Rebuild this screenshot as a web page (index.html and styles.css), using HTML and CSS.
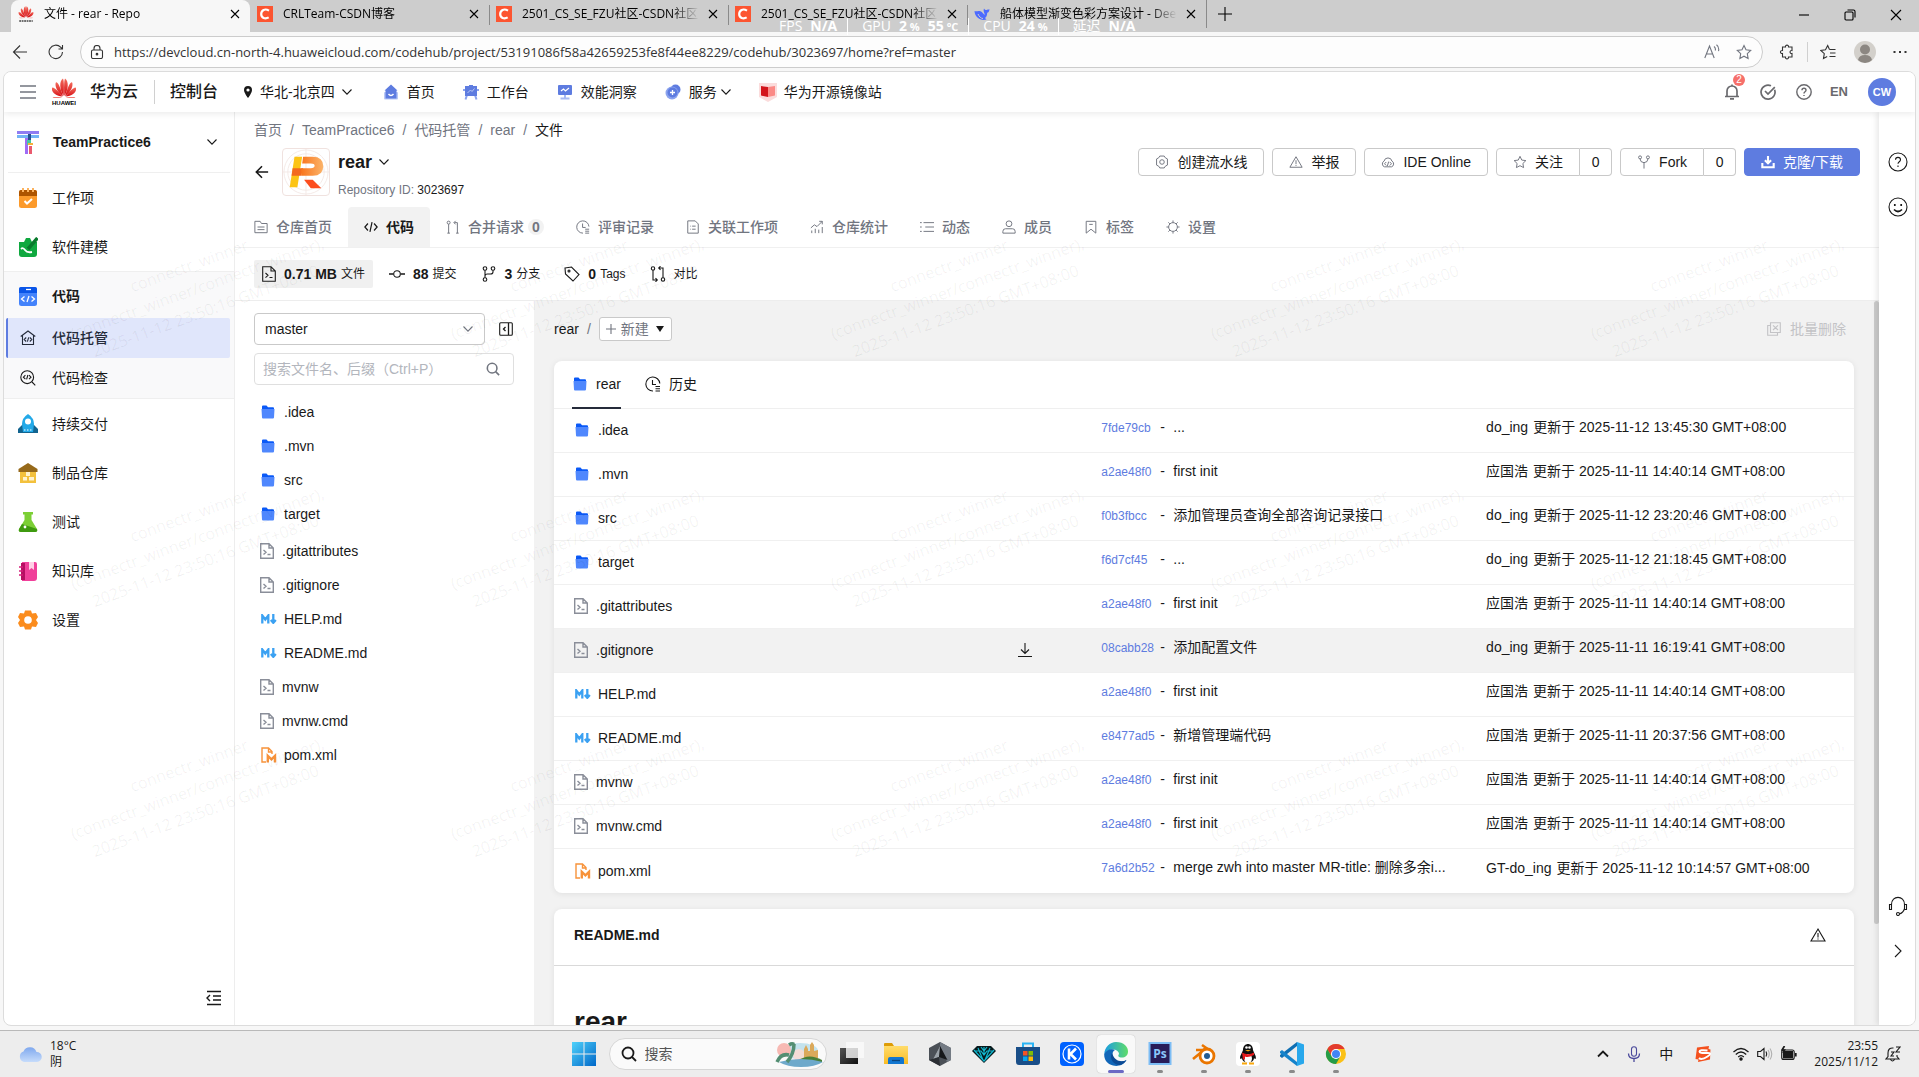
FILE: index.html
```html
<!DOCTYPE html>
<html lang="zh-CN">
<head>
    <meta charset="UTF-8">
    <meta name="viewport" content="width=device-width, initial-scale=1.0">
    <title>文件 - rear - Repo</title>
    <link rel="stylesheet" href="styles.css">
</head>
<body>

    <!-- icon sprite -->
    <svg class="sprite" aria-hidden="true">
        <defs>
            <linearGradient id="g-petal" x1="0" y1="0" x2="0" y2="1"><stop offset="0" stop-color="#f36b5c"/><stop offset="1" stop-color="#d50b12"/></linearGradient>
            <linearGradient id="g-win" x1="0" y1="0" x2="1" y2="1"><stop offset="0" stop-color="#4fd2fb"/><stop offset="1" stop-color="#0067c8"/></linearGradient>
            <linearGradient id="g-edge" x1="0" y1="0" x2="1" y2="0"><stop offset="0" stop-color="#1b9de2"/><stop offset="1" stop-color="#5fdc6a"/></linearGradient>
            <linearGradient id="g-cloud" x1="0" y1="0" x2="0" y2="1"><stop offset="0" stop-color="#7fa8ee"/><stop offset="1" stop-color="#c6dcfb"/></linearGradient>
            <linearGradient id="g-r" x1="0" y1="0" x2="1" y2="0"><stop offset="0" stop-color="#f9751d"/><stop offset="1" stop-color="#fbb46a"/></linearGradient>
            <linearGradient id="g-box" x1="0" y1="0" x2="1" y2="1"><stop offset="0" stop-color="#555"/><stop offset="1" stop-color="#111"/></linearGradient>
            <linearGradient id="g-folder" x1="0" y1="0" x2="0" y2="1"><stop offset="0" stop-color="#ffdc6b"/><stop offset="1" stop-color="#f9bb24"/></linearGradient>
        </defs>
        <symbol id="petals" viewBox="0 0 26 20">
            <g fill="url(#g-petal)">
                <path d="M12.600 18C8.500 12 8 3 12 .6 13.200 3 13 12 12.600 18z"/>
                <path d="M13.400 18C17.500 12 18 3 14 .6 12.800 3 13 12 13.400 18z"/>
                <path d="M12 18.300C7.500 3 5 3.200 4.600 5.200 3.900 9.500 7.500 15 12 18.300z"/>
                <path d="M14 18.300C18.500 3 21 3.200 21.400 5.200 22.100 9.500 18.500 15 14 18.300z"/>
                <path d="M11.500 18.600C9 15.500 4 9.500 1.300 9.600-.5 13.500 4.500 18 11.500 18.600z"/>
                <path d="M14.500 18.600C17 15.500 22 9.500 24.700 9.600 26.500 13.500 21.500 18 14.500 18.600z"/>
                <path d="M11.200 19.200H1.600C3 21 8 20.200 11.200 19.200z"/>
                <path d="M14.800 19.200H24.400C23 21 18 20.200 14.800 19.200z"/>
            </g>
        </symbol>
        <symbol id="chev" viewBox="0 0 12 12"><path d="M1.500 3.500 6 8.200l4.500-4.700"/></symbol>
        <symbol id="x" viewBox="0 0 12 12"><path d="m2 2 8 8M10 2l-8 8"/></symbol>
        <symbol id="back" viewBox="0 0 16 16"><path d="M15 8H1.500M8 1.500 1.500 8 8 14.500"/></symbol>
        <symbol id="star" viewBox="0 0 16 16"><path d="m8 1.500 2 4.300 4.700.6-3.400 3.300.8 4.700L8 12.200l-4.100 2.200.8-4.700L1.300 6.400 6 5.800z"/></symbol>
        <symbol id="help" viewBox="0 0 20 20"><circle cx="10" cy="10" r="9"/><path d="M7.500 7.800c0-3.200 5-3.200 5 0 0 2-2.500 1.800-2.500 4M10 13.600v1.400"/></symbol>
        <symbol id="warn" viewBox="0 0 16 16"><path d="M8 2 15 14H1zM8 6v4.500M8 11.500v1"/></symbol>
        <symbol id="search" viewBox="0 0 16 16"><circle cx="7" cy="7" r="5.500"/><path d="m11 11 4 4"/></symbol>
        <symbol id="folder" viewBox="0 0 14 14"><path d="M1 1.500q0-1 1-1h3.500L7 2.200h5q1 0 1 1V7H1z" fill="#0a59f7"/><path d="M.5 4h13L13 12.500q-.1 1-1 1H2q-1 0-1-1z" fill="#4f87fd"/></symbol>
        <symbol id="file" viewBox="0 0 14 16"><path d="M.7.700h8.300l4.300 4.300v10.300H.7zM9 .700V5h4.300M3.500 7l2.500 2.300L3.500 11.600M7.500 11.500h3"/></symbol>
        <symbol id="md" viewBox="0 0 16 10"><path d="M1.300 9.500V1.500L4.300 5.500 7.300 1.500v8M12.300 0v8.500M9.800 6l2.500 2.800L14.800 6" fill="none" stroke="#3ba1f2" stroke-width="2.300"/></symbol>
        <symbol id="xml" viewBox="0 0 16 16"><path d="M5 15H1V1h6.500L11 4.500V7M7.500 1v4H11" fill="none" stroke="#f7923a" stroke-width="1.400"/><path d="M6.800 15.500V8.800l3.600 3.500L14 8.800v6.700" fill="none" stroke="#f7923a" stroke-width="2.400"/></symbol>
        <symbol id="clock" viewBox="0 0 16 16"><path d="M8 15A7 7 0 1 1 14.800 7.500M7.500 4v4.500H11M10.500 10.500h4.500M10.500 12.800h4.500M10.500 15h4.500"/></symbol>
        <symbol id="csdn" viewBox="0 0 16 16"><rect width="16" height="16" fill="#fc5531"/><path d="M12 4.600C8 2.200 4.300 4 4.200 8c0 4 4 5.500 7.500 3.400" fill="none" stroke="#fff" stroke-width="2.200"/></symbol>
        <symbol id="compare" viewBox="0 0 16 16"><circle cx="3" cy="2.500" r="1.700"/><circle cx="13" cy="13.500" r="1.700"/><path d="M3 4.200V14h4M5.500 12.200 7.300 14l-1.800 1.800M13 11.800V2H9M10.500.200 8.700 2l1.800 1.800"/></symbol>
    </svg>

    <div class="tab-strip">
        <div class="tab tab-active">
            <svg class="fav" viewBox="0 0 26 26"><use href="#petals" width="26" height="20"/><path d="M2 24.500h22" stroke="#444" stroke-width="2.500" stroke-dasharray="3 1"/></svg>
            <span class="tab-title">文件 - rear - Repo</span>
            <button class="tab-close" aria-label="关闭"><svg class="ico s12"><use href="#x"/></svg></button>
        </div>
        <div class="tab">
            <svg class="fav"><use href="#csdn"/></svg>
            <span class="tab-title">CRLTeam-CSDN博客</span>
            <button class="tab-close" aria-label="关闭"><svg class="ico s12"><use href="#x"/></svg></button>
        </div>
        <div class="tab">
            <svg class="fav"><use href="#csdn"/></svg>
            <span class="tab-title">2501_CS_SE_FZU社区-CSDN社区云</span>
            <button class="tab-close" aria-label="关闭"><svg class="ico s12"><use href="#x"/></svg></button>
        </div>
        <div class="tab">
            <svg class="fav"><use href="#csdn"/></svg>
            <span class="tab-title">2501_CS_SE_FZU社区-CSDN社区云</span>
            <button class="tab-close" aria-label="关闭"><svg class="ico s12"><use href="#x"/></svg></button>
        </div>
        <div class="tab">
            <svg class="fav" viewBox="0 0 16 16"><path d="M.5 5c2 1 3.500-.8 6 .3 2 .8 3 3.200 4.500 3.500C10 6.500 9 4.500 10 2.500c.8 1 1.200 1.600 2.500 1.500 1-.5 1.500-.5 3-.8-.2 2-1 3.300-2.300 3.500 0 3-1 4.500-2.200 5.300l1.500 1.500C7 15 .8 12 .5 5z" fill="#4d6bfe"/><path d="M4 8c1 2.500 3 4.500 5 4.500" fill="none" stroke="#cdcdcd"/></svg>
            <span class="tab-title">船体模型渐变色彩方案设计 - DeepSeek</span>
            <button class="tab-close" aria-label="关闭"><svg class="ico s12"><use href="#x"/></svg></button>
        </div>
        <button class="new-tab" aria-label="新建标签页"><svg class="ico s14" viewBox="0 0 14 14"><path d="M7 0v14M0 7h14"/></svg></button>
        <div class="window-buttons">
            <button aria-label="最小化"><svg class="ico s12" viewBox="0 0 12 12"><path d="M1 6h10"/></svg></button>
            <button aria-label="还原"><svg class="ico s12" viewBox="0 0 12 12"><rect x="1" y="3" width="8" height="8" rx="1"/><path d="M3.500 1h6q1.500 0 1.500 1.500v6"/></svg></button>
            <button aria-label="关闭窗口"><svg class="ico s12" viewBox="0 0 12 12"><path d="m1 1 10 10M11 1 1 11"/></svg></button>
        </div>
    </div>

    <div class="perf">
        <span>FPS <b>N/A</b></span>
        <span>GPU <b>2<small> %</small></b> <b>55<small> °C</small></b></span>
        <span>CPU <b>24<small> %</small></b></span>
        <span>延迟 <b>N/A</b></span>
    </div>

    <div class="toolbar">
        <button aria-label="后退"><svg class="ico s16"><use href="#back"/></svg></button>
        <button aria-label="刷新"><svg class="ico s16" viewBox="0 0 16 16"><path d="M14.500 8A6.700 6.700 0 1 1 12.600 3.200L14.500 5M14.500 1v4h-4"/></svg></button>
        <div class="address">
            <svg class="ico s14" viewBox="0 0 14 14"><rect x="1.500" y="5" width="11" height="8.500" rx="1.500"/><path d="M4 5V3.500a3 3 0 0 1 6 0V5"/><circle cx="7" cy="9.200" r=".8" fill="currentColor"/></svg>
            <input type="text" aria-label="地址" value="https://devcloud.cn-north-4.huaweicloud.com/codehub/project/53191086f58a42659253fe8f44ee8229/codehub/3023697/home?ref=master">
            <svg class="ico s16 muted" viewBox="0 0 16 16"><path d="M.8 14 5.500 2l4.700 12M2.500 10h6M10 2.500q2 1.500 1.200 4M12.500.700q3 2.300 2 6.500"/></svg>
            <svg class="ico s16 muted"><use href="#star"/></svg>
        </div>
        <div class="toolbar-right">
            <button aria-label="扩展"><svg class="ico s16" viewBox="0 0 16 16"><path d="M3.500 3h3c-.5-2.500 3.500-2.500 3 0h3.500v3.500c-2.600-.5-2.600 3.500 0 3V13H9.500c.5 2.600-3.500 2.600-3 0h-3V9.500C.8 10 .8 6 3.500 6.500z"/></svg></button>
            <i class="vline"></i>
            <button aria-label="收藏夹"><svg class="ico s16" viewBox="0 0 16 16"><path d="M9.500 5.500 7.700 1.500 5.500 5.800.8 6.400l3.500 3.300-.8 4.700 3.700-2M9.500 5.500H15.500M10 9h5.500M9.500 12.500h6"/></svg></button>
            <svg class="avatar" viewBox="0 0 22 22"><circle cx="11" cy="11" r="11" fill="#d3d0cb"/><circle cx="11" cy="8.500" r="5" fill="#8c8782"/><path d="M4 19q1-5 7-5t7 5q-3 3-7 3t-7-3z" fill="#8c8782"/></svg>
            <button aria-label="更多"><svg class="ico s16" viewBox="0 0 16 16"><path d="M1.500 8h2M7 8h2M12.500 8h2" stroke-width="2"/></svg></button>
        </div>
    </div>

    <div class="frame">
        <header class="topbar">
            <button aria-label="菜单"><svg class="ico s16 muted" viewBox="0 0 16 16"><path d="M0 2h16M0 8h16M0 14h16" stroke-width="1.300"/></svg></button>
            <svg class="brand-logo" viewBox="0 0 26 28"><use href="#petals" width="26" height="20"/><text x="13" y="27" text-anchor="middle">HUAWEI</text></svg>
            <a class="brand" href="#">华为云</a>
            <i class="vline"></i>
            <a class="console" href="#">控制台</a>
            <a class="region" href="#"><svg class="pin" viewBox="0 0 8 12"><path d="M4 0a4 4 0 0 0-4 4c0 3 4 8 4 8s4-5 4-8a4 4 0 0 0-4-4zm0 2.400a1.600 1.600 0 1 1 0 3.200 1.600 1.600 0 0 1 0-3.200z" fill="#191919" fill-rule="evenodd"/></svg>华北-北京四<svg class="ico s12"><use href="#chev"/></svg></a>
            <nav class="topnav">
                <a href="#"><svg class="s16" viewBox="0 0 16 16"><rect x="1" y="8" width="14" height="7.500" rx="1" fill="#b9c8f5"/><path d="M8 .5 14.500 6.500H13.500V14.500H2.500V6.500H1.500z" fill="#5e7ce0"/><path d="M5.500 10q2.500 3 5 0" fill="none" stroke="#fff" stroke-width="1.400"/></svg>首页</a>
                <a href="#"><svg class="s16" viewBox="0 0 16 16"><path d="m4 11-1.500 4.500M12 11l1.500 4.500M0 6h16" stroke="#8ba3ee" stroke-width="2"/><path d="M2 2h4V1h4v1h4v10H2z" fill="#5e7ce0"/><path d="M4.500 9l3-3 1.500 1.500 2.500-3" fill="none" stroke="#b9c8f5"/></svg>工作台</a>
                <a href="#"><svg class="s16" viewBox="0 0 16 16"><rect x="1" y="1" width="14" height="10" rx="1" fill="#5e7ce0"/><path d="M4 7l2.500-2 2 2L12 4" fill="none" stroke="#fff" stroke-width="1.200"/><path d="M8 11v3M3.500 14.500h9" stroke="#a8baf2" stroke-width="2"/></svg>效能洞察</a>
                <a href="#"><svg class="s16" viewBox="0 0 16 16"><circle cx="10.500" cy="5.500" r="5" fill="#5e7ce0"/><circle cx="7" cy="9" r="6.500" fill="#8ba3ee"/><circle cx="7.500" cy="8.500" r="5" fill="#5e7ce0"/><path d="M7.500 6v5M5 8.500h5" stroke="#fff" stroke-width="1.300"/></svg>服务<svg class="ico s12 tight"><use href="#chev"/></svg></a>
                <a class="mirror" href="#"><svg viewBox="0 0 20 20"><path d="M1 1h18v14l-9 5-9-5z" fill="#fbdcdc"/><path d="M3 4l7 1v10l-7-1.500z" fill="#d3141b"/><path d="m10 5 7-1v9.500L10 15z" fill="#fb8a86"/></svg>华为开源镜像站</a>
            </nav>
            <div class="topbar-right">
                <button class="bell" aria-label="通知"><svg class="ico s16" viewBox="0 0 16 16"><path d="M3 12.200V7a5 5 0 0 1 10 0v5.200M1 12.500h14M6 14.800h4M8 .500V2" stroke-width="1.700"/></svg><span class="badge">2</span></button>
                <button aria-label="任务"><svg class="ico s16" viewBox="0 0 16 16"><path d="M14.600 5.700A7 7 0 1 1 11 1.800M5 7l3 3 6.800-6.800" stroke-width="1.700"/></svg></button>
                <button aria-label="帮助"><svg class="ico s16 bold"><use href="#help"/></svg></button>
                <button class="lang">EN</button>
                <button class="user">CW</button>
            </div>
        </header>

        <div class="body">
            <aside class="sidebar">
                <button class="project">
                    <svg class="project-logo" viewBox="0 0 22 23"><path d="M0 1.500h22" stroke="#8f7cf2" stroke-width="3"/><path d="M0 5.500h22" stroke="#72b4f5" stroke-width="3"/><path d="M8 7h3v16H8z" fill="#a06bf5"/><path d="M11 3h3v10h-3z" fill="#274f8d"/><path d="M10 9h4v5h-4z" fill="#45c7a2"/><path d="M11 13h5" stroke="#f5b13a" stroke-width="2"/><path d="M12 15h3v8h-3z" fill="#ea5a6e"/></svg>
                    <span>TeamPractice6</span>
                    <svg class="ico s12"><use href="#chev"/></svg>
                </button>
                <nav class="menu">
                    <a href="#"><svg viewBox="0 0 20 20"><rect x="1" y="2" width="18" height="18" rx="2.500" fill="#fc9a2b"/><path d="M1 8V4q0-2 2-2h14q2 0 2 2v4z" fill="#ad5400"/><path d="M5 0v4M10 0v4M15 0v4" stroke="#fdb35f" stroke-width="2"/><path d="m6.500 13 2.500 2.500 5-4.500" fill="none" stroke="#fff" stroke-width="2"/></svg>工作项</a>
                    <a href="#"><svg viewBox="0 0 20 20"><path d="M1 5h5l2-4h4l2 4h5v12q0 3-3 3H4q-3 0-3-3z" fill="#0fa83f"/><path d="M10 12 19.500 1" stroke="#087a2c" stroke-width="3.500"/><path d="M3 12q2-2 4 1t7 2" fill="none" stroke="#fff" stroke-width="1.800"/></svg>软件建模</a>
                    <div class="group">
                        <a class="on" href="#"><svg viewBox="0 0 20 20"><rect x="1" y="1" width="18" height="19" rx="2.500" fill="#4483fb"/><path d="M1 7V3q0-2 2-2h14q2 0 2 2v4z" fill="#0a55e8"/><path d="M8 3.500h5" stroke="#fff" stroke-width="1.300"/><path d="m6.500 10.500-3 2.500 3 2.500M13.500 10.500l3 2.500-3 2.500M11 10l-2 6" fill="none" stroke="#fff" stroke-width="1.300"/></svg>代码</a>
                        <a class="sub current" href="#"><svg class="ico s16" viewBox="0 0 16 16"><path d="M.7 6.500 8 1l7.300 5.500M2.500 5.500v9h11v-9M6.200 7.500l-2 2 2 2M9.800 7.500l2 2-2 2M8.700 7.300l-1.300 4.400"/></svg>代码托管</a>
                        <a class="sub" href="#"><svg class="ico s16" viewBox="0 0 16 16"><circle cx="7.200" cy="7.200" r="6.400"/><path d="m12 12 3.300 3.300M5.400 5.200l-2 2 2 2M9 5.200l2 2-2 2M7.900 5l-1.300 4.400"/></svg>代码检查</a>
                    </div>
                    <a href="#"><svg viewBox="0 0 20 20"><path d="M5 10 0 15v4h20v-4l-5-5z" fill="#12648f"/><path d="M10 0q6 4 6 10l-1 8H5L4 10Q4 4 10 0z" fill="#23a9e8"/><circle cx="10" cy="7.500" r="3" fill="#fff"/><path d="M6 16h8" stroke="#fff" stroke-dasharray="1.500"/></svg>持续交付</a>
                    <a href="#"><svg viewBox="0 0 20 20"><path d="M2 6h16v14H2z" fill="#f3c13d"/><path d="m10 0 9.500 6v3H.5V6z" fill="#96691a"/><path d="M8 9h4v4H8zM5 14h4v3.500H5zM11 14h5v3.500h-5z" fill="#fff3cf"/></svg>制品仓库</a>
                    <a href="#"><svg viewBox="0 0 20 20"><path d="M5 0h10v2.500h-1.500V8L19 17q1 3-2 3H3q-3 0-2-3L6.500 8V2.500H5z" fill="#7ccf35"/><path d="m4 12 15 5q1 3-2 3H3q-3 0-2-3z" fill="#3f9a10"/><circle cx="7" cy="15" r="1.400" fill="#fff"/></svg>测试</a>
                    <a href="#"><svg viewBox="0 0 20 20"><path d="M4 1h13q2 0 2 2v14q0 3-3 3H4z" fill="#f0409a"/><path d="M3 2h4v17H3z" fill="#b60f62"/><path d="M11 1h5v8l-2.500-2L11 9z" fill="#ffd0e6"/><path d="M1 6h4M1 10h4M1 14h4" stroke="#d61f7b" stroke-width="1.500"/></svg>知识库</a>
                    <a href="#"><svg viewBox="0 0 20 20"><path d="M7 .5h6l1 3 4-.5 2 4-2 3 2 3-2 4-4-.5-1 3H7l-1-3-4 .5-2-4 2-3-2-3L2 3l4 .5z" fill="#fb8c1d"/><circle cx="10" cy="10" r="3.800" fill="#fff"/></svg>设置</a>
                </nav>
                <button class="collapse" aria-label="收起"><svg class="ico s16" viewBox="0 0 16 16"><path d="M1 1.500h14M7 6h8M7 10h8M1 14.500h14M4 5 1 8l3 3" stroke-width="1.400"/></svg></button>
            </aside>

            <main>
                <div class="head">
                    <nav class="crumbs"><a href="#">首页</a><i>/</i><a href="#">TeamPractice6</a><i>/</i><a href="#">代码托管</a><i>/</i><a href="#">rear</a><i>/</i><span>文件</span></nav>
                    <div class="repo">
                        <button class="go-back" aria-label="返回"><svg class="ico s14 bold"><use href="#back"/></svg></button>
                        <svg class="repo-logo" viewBox="0 0 48 48"><circle cx="24" cy="24" r="19" fill="none" stroke="#f3e9e6"/><circle cx="24" cy="24" r="23" fill="none" stroke="#f3e9e6"/><path d="M24 0v48M0 24h48" stroke="#f3e9e6"/><path d="M12 8h8l-5 32H7z" fill="#fcc415"/><path d="M10 20h11l-2 8H9z" fill="#f36a1e"/><path d="M21 8h10q11 0 11 10T31 28H19v-8h10q4 0 4-2.500T29 15h-9z" fill="url(#g-r)"/><path d="M22 32h9l9 9H29z" fill="#fc4c1d"/></svg>
                        <div class="repo-info">
                            <h1>rear<svg class="ico s12"><use href="#chev"/></svg></h1>
                            <p>Repository ID: <span>3023697</span></p>
                        </div>
                        <div class="actions">
                            <button class="btn"><svg class="ico s14 muted" viewBox="0 0 16 16"><circle cx="8" cy="8" r="2.600"/><path d="M5.500 1.200h5l1.300 2 2.400 1.300v7l-2.400 1.300-1.300 2h-5l-1.300-2-2.400-1.300v-7l2.400-1.300z"/></svg>创建流水线</button>
                            <button class="btn"><svg class="ico s14 muted"><use href="#warn"/></svg>举报</button>
                            <button class="btn"><svg class="ico s14 muted" viewBox="0 0 16 16"><path d="M4 13.500a3.500 3.500 0 0 1-.5-6.500 4.600 4.600 0 0 1 9 0 3.500 3.500 0 0 1-.5 6.500zM6 8l-2 2 2 2M10 8l2 2-2 2M8.800 7.500l-1.500 5"/></svg>IDE Online</button>
                            <div class="pair"><button class="btn"><svg class="ico s14 muted"><use href="#star"/></svg>关注</button><button class="btn count">0</button></div>
                            <div class="pair"><button class="btn"><svg class="ico s14 muted" viewBox="0 0 16 16"><circle cx="3.500" cy="2.700" r="1.700"/><circle cx="12.500" cy="2.700" r="1.700"/><path d="M3.500 4.400q0 4 4.500 4.400 4.500-.4 4.500-4.400M8 8.800V15.500"/></svg>Fork</button><button class="btn count">0</button></div>
                            <button class="btn primary"><svg class="ico s14" viewBox="0 0 16 16"><path d="M8 1v8M4.500 6 8 9.500 11.500 6M1.500 9v5h13V9" stroke-width="2.400"/></svg>克隆/下载</button>
                        </div>
                    </div>
                </div>

                <nav class="tabs">
                    <a href="#"><svg class="ico s14" viewBox="0 0 16 16"><path d="M1 14.500v-13h6l1.500 2.500H15v10.500zM4 8h8M4 11h8"/></svg>仓库首页</a>
                    <a class="active" href="#"><svg class="ico s14" viewBox="0 0 16 16"><path d="M4.500 4 1 8l3.500 4M11.500 4 15 8l-3.500 4M9.200 2.500l-2.400 11" stroke-width="1.400"/></svg>代码</a>
                    <a href="#"><svg class="ico s14" viewBox="0 0 16 16"><circle cx="3" cy="3" r="1.700"/><path d="M3 4.700V15M13 15V3H9.500M11 1 9 3l2 2M1.500 15h3M11.500 15h3"/></svg>合并请求<span class="pill">0</span></a>
                    <a href="#"><svg class="ico s14"><use href="#clock"/></svg>评审记录</a>
                    <a href="#"><svg class="ico s14" viewBox="0 0 16 16"><path d="M2 1h8.500L14 4.500V15H2zM7 7h4M7 10.500h4M5 7h.800M5 10.500h.800"/></svg>关联工作项</a>
                    <a href="#"><svg class="ico s14" viewBox="0 0 16 16"><path d="M1 9l4-3.500 3 2L14 1.500M10.500 1.500H14V5M2 12v3M6 10v5M10 11v4M14 8v7"/></svg>仓库统计</a>
                    <a href="#"><svg class="ico s14" viewBox="0 0 16 16"><path d="M4 3h12M6 8h10M4 13h12M0 3h2M0 8h2M0 13h2"/></svg>动态</a>
                    <a href="#"><svg class="ico s14" viewBox="0 0 16 16"><circle cx="8" cy="4.300" r="3.300"/><path d="M1 15v-2q0-3 3-3h8q3 0 3 3v2z"/></svg>成员</a>
                    <a href="#"><svg class="ico s14" viewBox="0 0 16 16"><path d="M2.500 1.500h11V15L8 10.500 2.500 15zM6 5h4"/></svg>标签</a>
                    <a href="#"><svg class="ico s14" viewBox="0 0 16 16"><circle cx="8" cy="8" r="5"/><path d="M8 .500V3M8 13v2.500M.500 8H3M13 8h2.500M2.700 2.700l1.800 1.800M11.500 11.500l1.800 1.800M2.700 13.300l1.800-1.800M11.500 4.500l1.800-1.800"/></svg>设置</a>
                </nav>

                <div class="stats">
                    <a class="active" href="#"><svg class="ico file"><use href="#file"/></svg><b>0.71 MB</b>文件</a>
                    <a href="#"><svg class="ico s16" viewBox="0 0 16 16"><circle cx="8" cy="8" r="3.300"/><path d="M0 8h4.500M11.500 8H16" stroke-width="1.300"/></svg><b>88</b>提交</a>
                    <a href="#"><svg class="ico s16" viewBox="0 0 16 16"><circle cx="4" cy="2.500" r="1.800"/><circle cx="12" cy="2.500" r="1.800"/><circle cx="4" cy="13.500" r="1.800"/><path d="M4 4.300v7.400M12 4.300V6Q12 8 9.500 8H6.500Q4 8 4 10"/></svg><b>3</b>分支</a>
                    <a href="#"><svg class="ico s16" viewBox="0 0 16 16"><path d="M1 2 7.500 1 15 8.500 9 15 1.500 8z"/><circle cx="5" cy="5" r="1"/></svg><b>0</b>Tags</a>
                    <a href="#"><svg class="ico s16"><use href="#compare"/></svg>对比</a>
                </div>

                <div class="content">
                    <section class="tree">
                        <div class="branch-row">
                            <div class="select">
                                <select aria-label="分支"><option>master</option></select>
                                <svg class="ico s12"><use href="#chev"/></svg>
                            </div>
                            <button aria-label="收起目录"><svg class="ico s14" viewBox="0 0 14 14"><rect x=".7" y=".7" width="12.600" height="12.600" rx="1"/><path d="M9.500 1v12M6.500 5l-2 2 2 2" stroke-width="1.300"/></svg></button>
                        </div>
                        <div class="search">
                            <input type="text" aria-label="搜索文件" placeholder="搜索文件名、后缀（Ctrl+P）">
                            <svg class="ico s14 bold"><use href="#search"/></svg>
                        </div>
                        <ul>
                            <li><a href="#"><svg class="folder"><use href="#folder"/></svg>.idea</a></li>
                            <li><a href="#"><svg class="folder"><use href="#folder"/></svg>.mvn</a></li>
                            <li><a href="#"><svg class="folder"><use href="#folder"/></svg>src</a></li>
                            <li><a href="#"><svg class="folder"><use href="#folder"/></svg>target</a></li>
                        </ul>
                        <ul class="files">
                            <li><a href="#"><svg class="ico file"><use href="#file"/></svg>.gitattributes</a></li>
                            <li><a href="#"><svg class="ico file"><use href="#file"/></svg>.gitignore</a></li>
                            <li><a href="#"><svg class="md"><use href="#md"/></svg>HELP.md</a></li>
                            <li><a href="#"><svg class="md"><use href="#md"/></svg>README.md</a></li>
                            <li><a href="#"><svg class="ico file"><use href="#file"/></svg>mvnw</a></li>
                            <li><a href="#"><svg class="ico file"><use href="#file"/></svg>mvnw.cmd</a></li>
                            <li><a href="#"><svg class="xml"><use href="#xml"/></svg>pom.xml</a></li>
                        </ul>
                    </section>

                    <section class="panel">
                        <div class="path-row">
                            <a href="#">rear</a><i>/</i>
                            <button class="create"><svg class="ico s12" viewBox="0 0 12 12"><path d="M6 1v10M1 6h10"/></svg>新建<svg class="caret" viewBox="0 0 8 6"><path d="M0 0h8L4 6z"/></svg></button>
                            <button class="batch" disabled><svg class="ico s14" viewBox="0 0 14 14"><path d="M3.500.700h9.800v9.800H3.500zM3.500 3.500H.7v9.800h9.800v-2.800M6 3.300l5 4.700M11 3.300 6 8"/></svg>批量删除</button>
                        </div>

                        <div class="card">
                            <div class="card-tabs">
                                <a class="active" href="#"><svg class="folder"><use href="#folder"/></svg>rear</a>
                                <a href="#"><svg class="ico s16"><use href="#clock"/></svg>历史</a>
                            </div>
                            <table>
                                <colgroup><col class="c-name"><col class="c-commit"><col></colgroup>
                                <tbody>
                                    <tr><td><div class="name"><svg class="folder"><use href="#folder"/></svg><a href="#">.idea</a></div></td><td><a class="hash" href="#">7fde79cb</a><i>-</i>...</td><td><span class="who">do_ing</span>更新于 2025-11-12 13:45:30 GMT+08:00</td></tr>
                                    <tr><td><div class="name"><svg class="folder"><use href="#folder"/></svg><a href="#">.mvn</a></div></td><td><a class="hash" href="#">a2ae48f0</a><i>-</i>first init</td><td><span class="who">应国浩</span>更新于 2025-11-11 14:40:14 GMT+08:00</td></tr>
                                    <tr><td><div class="name"><svg class="folder"><use href="#folder"/></svg><a href="#">src</a></div></td><td><a class="hash" href="#">f0b3fbcc</a><i>-</i>添加管理员查询全部咨询记录接口</td><td><span class="who">do_ing</span>更新于 2025-11-12 23:20:46 GMT+08:00</td></tr>
                                    <tr><td><div class="name"><svg class="folder"><use href="#folder"/></svg><a href="#">target</a></div></td><td><a class="hash" href="#">f6d7cf45</a><i>-</i>...</td><td><span class="who">do_ing</span>更新于 2025-11-12 21:18:45 GMT+08:00</td></tr>
                                    <tr><td><div class="name"><svg class="ico file"><use href="#file"/></svg><a href="#">.gitattributes</a></div></td><td><a class="hash" href="#">a2ae48f0</a><i>-</i>first init</td><td><span class="who">应国浩</span>更新于 2025-11-11 14:40:14 GMT+08:00</td></tr>
                                    <tr class="hover"><td><div class="name"><svg class="ico file"><use href="#file"/></svg><a href="#">.gitignore</a><button aria-label="下载"><svg class="ico s14" viewBox="0 0 14 14"><path d="M7 0v10M3 6.500 7 10.500l4-4M0 13.500h14"/></svg></button></div></td><td><a class="hash" href="#">08cabb28</a><i>-</i>添加配置文件</td><td><span class="who">do_ing</span>更新于 2025-11-11 16:19:41 GMT+08:00</td></tr>
                                    <tr><td><div class="name"><svg class="md"><use href="#md"/></svg><a href="#">HELP.md</a></div></td><td><a class="hash" href="#">a2ae48f0</a><i>-</i>first init</td><td><span class="who">应国浩</span>更新于 2025-11-11 14:40:14 GMT+08:00</td></tr>
                                    <tr><td><div class="name"><svg class="md"><use href="#md"/></svg><a href="#">README.md</a></div></td><td><a class="hash" href="#">e8477ad5</a><i>-</i>新增管理端代码</td><td><span class="who">应国浩</span>更新于 2025-11-11 20:37:56 GMT+08:00</td></tr>
                                    <tr><td><div class="name"><svg class="ico file"><use href="#file"/></svg><a href="#">mvnw</a></div></td><td><a class="hash" href="#">a2ae48f0</a><i>-</i>first init</td><td><span class="who">应国浩</span>更新于 2025-11-11 14:40:14 GMT+08:00</td></tr>
                                    <tr><td><div class="name"><svg class="ico file"><use href="#file"/></svg><a href="#">mvnw.cmd</a></div></td><td><a class="hash" href="#">a2ae48f0</a><i>-</i>first init</td><td><span class="who">应国浩</span>更新于 2025-11-11 14:40:14 GMT+08:00</td></tr>
                                    <tr><td><div class="name"><svg class="xml"><use href="#xml"/></svg><a href="#">pom.xml</a></div></td><td><a class="hash" href="#">7a6d2b52</a><i>-</i>merge zwh into master MR-title: 删除多余i...</td><td><span class="who">GT-do_ing</span>更新于 2025-11-12 10:14:57 GMT+08:00</td></tr>
                                </tbody>
                            </table>
                        </div>

                        <div class="card readme">
                            <div class="readme-head"><h3>README.md</h3><svg class="ico s16"><use href="#warn"/></svg></div>
                            <h2>rear</h2>
                        </div>
                        <div class="scrollbar"></div>
                    </section>
                </div>
            </main>

            <aside class="rail">
                <button aria-label="帮助"><svg class="ico s20"><use href="#help"/></svg></button>
                <button aria-label="反馈"><svg class="ico s20" viewBox="0 0 20 20"><circle cx="10" cy="10" r="9"/><path d="M6 12.500q4 4 8 0M6.800 7v2M13.200 7v2" stroke-width="1.700"/></svg></button>
                <button class="headset" aria-label="客服"><svg class="ico s20" viewBox="0 0 20 20"><path d="M3.500 8.500C3.500-1 16.500-1 16.500 8.500v4q-1 4-5 5.500M3.500 8.500h-2v5h2zM16.500 8.500h2v5h-2"/><circle cx="10" cy="18" r="1.500"/></svg></button>
                <button aria-label="展开"><svg class="ico s16" viewBox="0 0 16 16"><path d="m5 2 6 6-6 6"/></svg></button>
            </aside>
        </div>

        <div class="watermark" id="watermark" aria-hidden="true"></div>
    </div>

    <footer class="taskbar">
        <button class="weather">
            <svg viewBox="0 0 24 16"><path d="M6 16a5.500 5.500 0 0 1-.5-10.500A7 7 0 0 1 18.500 6 5 5 0 0 1 19 16z" fill="url(#g-cloud)"/></svg>
            <span>18°C<br>阴</span>
        </button>
        <div class="apps">
            <button aria-label="开始"><svg viewBox="0 0 24 24"><path d="M0 0h11.500v11.500H0zM12.500 0H24v11.500H12.500zM0 12.500h11.500V24H0zM12.500 12.500H24V24H12.500z" fill="url(#g-win)"/></svg></button>
            <label class="task-search">
                <svg class="ico s16 bold"><use href="#search"/></svg>
                <input type="text" placeholder="搜索" aria-label="搜索">
                <svg class="scene" viewBox="0 0 50 26"><ellipse cx="27" cy="10" rx="18" ry="8" fill="#c4e3ee"/><circle cx="11" cy="9" r="7" fill="#f7b9b3"/><circle cx="26" cy="14" r="6" fill="#f4dcd6"/><path d="M31 17V8l2-4 2 4v2h2V4l2-3 2 3v6l4-1v8z" fill="#dba95b"/><path d="M26 19q10-7 23 0v2H26z" fill="#497f38"/><path d="M6 21q22-6 44 0-8 5-22 5T6 21z" fill="#6ea9cb"/><path d="M4 21q4-9 12-7" fill="none" stroke="#538e72" stroke-width="3.500"/><path d="M14 21q7-8 7-18M21 3.500q-2-1.500-5 .5" fill="none" stroke="#538e72" stroke-width="3.500"/></svg>
            </label>
            <button aria-label="任务视图"><svg viewBox="0 0 24 24"><rect y="6" width="18" height="16" fill="url(#g-box)"/><rect x="6" width="18" height="16" fill="#fafafa" opacity=".8"/></svg></button>
            <button aria-label="文件资源管理器"><svg viewBox="0 0 24 24"><path d="M0 2q0-1 1-1h7l2 3H0z" fill="#dd9c07"/><path d="M0 4h24v18H0z" fill="url(#g-folder)"/><path d="M4 22v-5q0-2 2-2h12q2 0 2 2v5z" fill="#1176d0"/><path d="M8 18.500h8" stroke="#0a467f" stroke-width="1.300"/></svg></button>
            <button aria-label="启动器"><svg viewBox="0 0 24 24"><path d="M12 0 23 6v12l-11 6L1 18V6z" fill="#4b5057"/><path d="M12 0 23 6v12l-4 2L12 4z" fill="#747b84"/><path d="M12 4 19.500 18 11 15l-6.500 3z" fill="#16181b"/><path d="M12 4 4.500 18l6.500-3z" fill="#9aa1a8"/><path d="M1 18l10-3 1 9z" fill="#2b2e33"/></svg></button>
            <button aria-label="钻石"><svg viewBox="0 0 24 24"><path d="M5 4h14l5 5-12 12L0 9z" fill="#07191c"/><path d="M2 8l10 11L22 8M6 6l5 12M18 6l-5 12M12 5v9M3 9h6l3 4 3-4h6M9 5l3 4 3-4" fill="none" stroke="#12b8cf" stroke-width="1.200"/></svg></button>
            <button aria-label="应用商店"><svg viewBox="0 0 24 24"><path d="M7 6V1.500h10V6" fill="none" stroke="#28b4f5" stroke-width="2"/><path d="M0 5h24v15q0 3-3 3H3q-3 0-3-3z" fill="#194e88"/><path d="M7 9h4.500v4.500H7z" fill="#f35325"/><path d="M12.500 9H17v4.500h-4.500z" fill="#81bc06"/><path d="M7 14.500h4.500V19H7z" fill="#05a6f0"/><path d="M12.500 14.500H17V19h-4.500z" fill="#ffba08"/></svg></button>
            <button aria-label="酷狗"><svg viewBox="0 0 24 24"><rect width="24" height="24" rx="4" fill="#0062ff"/><circle cx="12" cy="12" r="9" fill="none" stroke="#fff" stroke-width="1.200"/><path d="M9 6.500v11M16 6.500 10.500 12l5.500 5.500" fill="none" stroke="#fff" stroke-width="2.600"/></svg></button>
            <button class="running focused" aria-label="Edge"><svg viewBox="0 0 24 24"><path d="M.3 12C.5 5 6 0 12 0c8 0 12 5 12 9.500 0 4-3 6-6 6-3.500 0-4.500-1.500-3-3.500C15 7 5 5 .3 12z" fill="url(#g-edge)"/><path d="M.2 12C2 7.500 8 6 11 8c-4 1.500-3.500 10 3.500 11.500 3 .6 6-.4 8-1.500C19 24 13 24.500 9 23.500 3 22 0 17.500.2 12z" fill="#1166b8"/><path d="M8 11c-3 5 1 12 8 12 3-.5 5-2.500 6.500-5-5 2.500-12 1.500-14.500-7z" fill="#0c4a94"/></svg></button>
            <button class="running" aria-label="Photoshop"><svg viewBox="0 0 24 24"><rect x="1.500" y="1" width="21" height="21" fill="#281c58" stroke="#7dbdf5" stroke-width="2"/><text x="12" y="16" text-anchor="middle" class="ps">Ps</text></svg></button>
            <button class="running" aria-label="Blender"><svg viewBox="0 0 24 24"><path d="M1 17 12 8H4M10 3l10 7" fill="none" stroke="#ea7600" stroke-width="2.600"/><circle cx="15" cy="14" r="7" fill="#fff" stroke="#ea7600" stroke-width="2.800"/><circle cx="15" cy="14" r="3" fill="#235c93"/></svg></button>
            <button class="running" aria-label="QQ"><svg viewBox="0 0 24 24"><rect width="24" height="24" rx="4" fill="#fff"/><path d="M7 8c0-8 10-8 10 0 1 3 4 7 2.500 9-1-.2-1.500-1-1.500-1 0 6-12 6-12 0 0 0-.5.8-1.500 1C3 15 6 11 7 8z" fill="#111"/><ellipse cx="12" cy="16.500" rx="4" ry="4.500" fill="#fff"/><path d="M6 10.500q6 3.500 12 0v2.500q-6 3-9 1.500v3H7z" fill="#e61b1b"/><path d="M9 8h6l-3 1.500z" fill="#f9a80d"/><circle cx="10.500" cy="5.500" r="1.300" fill="#fff"/><circle cx="13.500" cy="5.500" r="1.300" fill="#fff"/><path d="M6 21.500h5M13 21.500h5" stroke="#f9a80d" stroke-width="2"/></svg></button>
            <button class="running" aria-label="VS Code"><svg viewBox="0 0 24 24"><path d="m17 4L2 16l-2-1.500V13L17 0z" fill="#0f6fb3"/><path d="M17 20 2 8 0 9.500V11l17 13z" fill="#1583cb"/><path d="m17 0 7 2.500v19L17 24z" fill="#28a8ec"/></svg></button>
            <button class="running" aria-label="Chrome"><svg viewBox="0 0 24 24"><circle cx="12" cy="12" r="10" fill="#fbc116"/><path d="M3.300 7a10 10 0 0 1 17.400 0H12L7.700 14.500z" fill="#e33b2e"/><path d="M3.300 7A10 10 0 0 0 12 22l4.300-7.500H7.700z" fill="#259c48"/><circle cx="12" cy="12" r="5" fill="#fff"/><circle cx="12" cy="12" r="4" fill="#4285f4"/></svg></button>
        </div>
        <div class="tray">
            <button aria-label="显示隐藏的图标"><svg class="ico s12 bold" viewBox="0 0 12 12"><path d="M1 8.500 6 3.500l5 5"/></svg></button>
            <button class="mic" aria-label="麦克风"><svg class="ico s16" viewBox="0 0 16 16"><rect x="5.500" y=".700" width="5" height="9.500" rx="2.500"/><path d="M2.500 7.500q0 5 5.500 5t5.500-5M8 12.500V16" stroke-width="1.300"/></svg></button>
            <button class="ime">中</button>
            <button class="sogou" aria-label="输入法"><svg viewBox="0 0 16 16"><path d="M2 1.500 14 0l-.5 3 2 .5-.5 10L3 16l.500-2.500-3-.5L1 9z" fill="#f4511e"/><path d="M12.500 4.500q-8-1-8 1t7 1.500 1 3.500-8.500 1.500" fill="none" stroke="#fff" stroke-width="2"/></svg></button>
            <button class="net" aria-label="网络和声音">
                <svg class="ico s16" viewBox="0 0 16 16"><path d="M.5 6q7.500-7 15 0M2.800 8.500q5.200-5 10.400 0M5.200 11q2.800-2.700 5.600 0" stroke-width="1.300"/><circle cx="8" cy="13" r="1.200" fill="currentColor"/></svg>
                <svg class="ico s16" viewBox="0 0 16 16"><path d="M.7 5.500h2.800L7 2.500v11l-3.500-3H.7zM9 5.500q1.500 2.500 0 5"/><path d="M11 4q2.500 4 0 8M13 2.500q3.500 5.500 0 11" stroke="#b0b0b0"/></svg>
                <svg class="ico s16" viewBox="0 0 16 16"><rect x=".7" y="4" width="12.500" height="9.500" rx="2"/><rect x="2.500" y="5.500" width="9" height="6.500" fill="currentColor"/><path d="M14.800 7v3.500M3.500 0 1 4h2.500L2 7" stroke-width="1.700"/></svg>
            </button>
            <div class="clock">23:55<br>2025/11/12</div>
            <button aria-label="通知中心"><svg class="ico s16" viewBox="0 0 16 16"><path d="M8.500 2Q3 1.500 3 7v3.500L1 13h13l-2-2.500V9M5.500 13.500q2 3 4 0M6 6h3L6 10h3M11 1h4l-4 5h4"/></svg></button>
        </div>
    </footer>

    <script>
        // user watermark repeated over the whole page
        const watermark = document.getElementById('watermark');
        const lines = ['connectr_winner', '(connectr_winner/connectr_winner),', '2025-11-12 23:50:16 GMT+08:00'];

        for (let i = 0; i < 15; i++) {
            const mark = document.createElement('p');
            mark.innerHTML = lines.join('<br>');
            watermark.appendChild(mark);
        }
    </script>
</body>
</html>
```
FILE: styles.css
```css
* {
    box-sizing: border-box;
}

body {
    margin: 0;
    height: 100vh;
    display: flex;
    flex-direction: column;
    overflow: hidden;
    position: relative;
    background: #f7f7f7;
    color: #191919;
    font-family: "Liberation Sans", "Noto Sans CJK SC", sans-serif;
    font-size: 14px;
    line-height: 20px;
}

h1, h2, h3, p, ul {
    margin: 0;
    padding: 0;
}

ul {
    list-style: none;
}

i {
    font-style: normal;
}

a {
    color: inherit;
    text-decoration: none;
}

button {
    display: flex;
    align-items: center;
    justify-content: center;
    padding: 0;
    border: none;
    background: none;
    color: inherit;
    font: inherit;
}

input, select {
    min-width: 0;
    border: none;
    outline: none;
    background: none;
    color: inherit;
    font: inherit;
}

svg {
    flex-shrink: 0;
}

.sprite {
    position: absolute;
    width: 0;
    height: 0;
}

.ico {
    fill: none;
    stroke: currentColor;
    stroke-width: 1.1;
}

.s12 { width: 12px; height: 12px; }
.s14 { width: 14px; height: 14px; }
.s16 { width: 16px; height: 16px; }
.s20 { width: 20px; height: 20px; }

.bold { stroke-width: 1.8; }
.muted { color: #71757f; }

.vline {
    width: 1px;
    height: 20px;
    background: #d0d0d0;
}

/* browser tabs */
.tab-strip {
    display: flex;
    height: 32px;
    padding-left: 11px;
    background: #cdcdcd;
    color: #000;
    font-family: "Open Sans", "Noto Sans CJK SC", sans-serif;
    font-size: 12px;
}

.tab {
    display: flex;
    align-items: center;
    width: 239px;
    padding: 0 9px 4px 7px;
    position: relative;
}

.tab:not(.tab-active) + .tab::before {
    content: "";
    position: absolute;
    left: 0;
    top: 5px;
    width: 1px;
    height: 20px;
    background: #8a8a8a;
}

.tab-active {
    background: #f7f7f7;
    border-radius: 8px 8px 0 0;
}

.fav {
    width: 16px;
    height: 16px;
    margin-right: 10px;
}

.tab-title {
    flex: 1;
    overflow: hidden;
    white-space: nowrap;
    margin-right: 8px;
    mask-image: linear-gradient(to right, #000 85%, transparent);
}

.new-tab {
    width: 36px;
    height: 28px;
    border-left: 1px solid #8a8a8a;
}

.window-buttons {
    display: flex;
    margin-left: auto;
}

.window-buttons button {
    width: 46px;
    height: 30px;
}

.perf {
    position: absolute;
    left: 779px;
    top: 18px;
    display: flex;
    color: #fff;
    font-family: "Open Sans", "Noto Sans CJK SC", sans-serif;
    font-size: 14px;
    line-height: 16px;
}

.perf span {
    display: flex;
    gap: 8px;
    padding-right: 10px;
}

.perf span + span {
    border-left: 1px solid #fff;
    padding-left: 14px;
}

.perf small {
    font-size: 11px;
}

/* address bar */
.toolbar {
    display: flex;
    align-items: center;
    gap: 16px;
    height: 39px;
    padding: 0 11px 0 12px;
    color: #333;
}

.toolbar > button {
    width: 16px;
}

.toolbar > button:first-child {
    margin-right: 4px;
}

.address {
    flex: 1;
    display: flex;
    align-items: center;
    gap: 10px;
    height: 32px;
    padding: 0 10px 0 9px;
    border: 1px solid #ccc;
    border-radius: 16px;
    background: #fdfdfd;
    font-family: "Open Sans", "Noto Sans CJK SC", sans-serif;
    font-size: 13px;
}

.address input {
    flex: 1;
    padding: 0;
}

.address .muted + .muted {
    margin-left: 6px;
}

.toolbar-right {
    display: flex;
    align-items: center;
    gap: 12px;
}

.toolbar-right button {
    width: 16px;
}

.avatar {
    width: 22px;
    height: 22px;
    margin: 0 4px 0 6px;
}

/* page frame */
.frame {
    flex: 1;
    min-height: 0;
    display: flex;
    flex-direction: column;
    position: relative;
    margin: 0 3px 4px;
    border: 1px solid #dcdcdc;
    border-radius: 8px;
    overflow: hidden;
    background: #fff;
}

.topbar {
    display: flex;
    align-items: center;
    height: 40px;
    padding: 0 19px 0 16px;
    position: relative;
    z-index: 2;
    background: #fff;
    box-shadow: 0 2px 6px rgba(0, 0, 0, 0.08);
}

.brand-logo {
    width: 26px;
    height: 28px;
    margin: 0 13px 0 15px;
}

.brand-logo text {
    font-size: 6px;
    font-weight: bold;
}

.brand, .console {
    font-size: 16px;
    font-weight: 500;
}

.topbar .vline {
    margin: 0 15px 0 16px;
    height: 24px;
}

.region {
    display: flex;
    align-items: center;
    gap: 8px;
    margin: 0 30px 0 26px;
}

.region .ico {
    margin-left: -2px;
}

.pin {
    width: 8px;
    height: 12px;
}

.topnav {
    display: flex;
    gap: 28px;
}

.topnav a {
    display: flex;
    align-items: center;
    gap: 8px;
}

.topnav .tight {
    margin-left: -5px;
}

.topnav .mirror svg {
    width: 20px;
    height: 20px;
    margin: 0 -2px;
}

.topbar-right {
    display: flex;
    align-items: center;
    gap: 20px;
    margin-left: auto;
    color: #6a6a6e;
}

.bell {
    position: relative;
}

.badge {
    position: absolute;
    left: 9px;
    top: -10px;
    width: 12px;
    height: 12px;
    border-radius: 6px;
    background: #f66f6a;
    color: #fff;
    font-size: 10px;
    line-height: 12px;
}

.lang {
    margin-left: -2px;
    font-weight: bold;
    font-size: 13px;
}

.user {
    width: 28px;
    height: 28px;
    border-radius: 14px;
    background: #5e7ce0;
    color: #fff;
    font-size: 11px;
    font-weight: bold;
}

.body {
    flex: 1;
    min-height: 0;
    display: flex;
}

/* left menu */
.sidebar {
    width: 231px;
    display: flex;
    flex-direction: column;
    border-right: 1px solid #ededed;
}

.project {
    gap: 14px;
    height: 61px;
    margin: 0 4px;
    padding: 0 12px 0 9px;
    border-bottom: 1px solid #efefef;
    font-weight: bold;
}

.project span {
    flex: 1;
    text-align: left;
}

.project-logo {
    width: 22px;
    height: 23px;
}

.menu a {
    display: flex;
    align-items: center;
    gap: 14px;
    height: 49px;
    padding-left: 14px;
}

.menu svg {
    width: 20px;
    height: 20px;
}

.group {
    background: #f9f9fa;
    border-top: 1px solid #efefef;
    border-bottom: 1px solid #efefef;
}

.menu .on {
    height: 48px;
    font-weight: bold;
}

.menu .sub {
    height: 40px;
    margin: 0 4px 0 2px;
    padding-left: 14px;
    gap: 16px;
}

.menu .sub svg {
    width: 16px;
    height: 16px;
}

.menu .current {
    margin-top: -2px;
    padding-left: 12px;
    border-left: 2px solid #5e7ce0;
    border-radius: 2px;
    background: #e0e6fb;
    color: #252b3a;
    font-weight: 500;
}

.collapse {
    margin: auto 12px 19px auto;
}

/* repository header */
main {
    flex: 1;
    min-width: 0;
    display: flex;
    flex-direction: column;
}

.head {
    padding: 8px 19px 7px;
}

.crumbs {
    display: flex;
    gap: 8px;
    color: #71757f;
}

.crumbs span {
    color: #191919;
}

.repo {
    display: flex;
    margin-top: 8px;
}

.go-back {
    width: 16px;
    height: 48px;
}

.repo-logo {
    width: 48px;
    height: 48px;
    margin: 0 8px 0 12px;
    border: 1px solid #f0e2df;
    border-radius: 4px;
}

.repo-info h1 {
    display: flex;
    align-items: center;
    gap: 6px;
    font-size: 18px;
    line-height: 28px;
}

.repo-info p {
    margin-top: 4px;
    color: #71757f;
    font-size: 12px;
}

.repo-info p span {
    color: #191919;
}

.actions {
    display: flex;
    align-items: flex-start;
    gap: 8px;
    margin-left: auto;
}

.btn {
    gap: 8px;
    height: 28px;
    padding: 0 16px;
    border: 1px solid #c9c9c9;
    border-radius: 4px;
}

.pair {
    display: flex;
}

.pair .btn:first-child {
    border-radius: 4px 0 0 4px;
}

.pair .count {
    width: 32px;
    padding: 0;
    border-left: none;
    border-radius: 0 4px 4px 0;
}

.primary {
    border-color: #5e7ce0;
    background: #5e7ce0;
    color: #fff;
}

.tabs {
    display: flex;
    padding-left: 3px;
    border-bottom: 1px solid #f0f0f0;
}

.tabs a {
    display: flex;
    align-items: center;
    gap: 8px;
    height: 40px;
    padding: 0 16px;
    color: #71757f;
    font-weight: 500;
}

.tabs .active {
    border-radius: 4px 4px 0 0;
    background: #f2f2f2;
    color: #191919;
    font-weight: bold;
}

.pill {
    width: 16px;
    margin-left: -4px;
    border-radius: 8px;
    background: #f2f2f2;
    font-weight: bold;
    line-height: 16px;
    text-align: center;
}

.stats {
    display: flex;
    gap: 8px;
    padding: 12px 19px;
    border-bottom: 1px solid #ededed;
}

.stats a {
    display: flex;
    align-items: center;
    height: 28px;
    padding: 0 8px;
    gap: 4px;
    border-radius: 2px;
    font-size: 12px;
}

.stats svg {
    margin-right: 4px;
}

.stats b {
    font-size: 14px;
}

.stats .active {
    background: #f0f0f0;
}

.content {
    flex: 1;
    min-height: 0;
    display: flex;
}

/* file tree */
.tree {
    width: 299px;
    padding: 12px 20px 0 19px;
}

.branch-row {
    display: flex;
    align-items: center;
    gap: 14px;
    margin-bottom: 8px;
    padding-right: 1px;
}

.select {
    flex: 1;
    position: relative;
    height: 32px;
    border: 1px solid #c9c9c9;
    border-radius: 4px;
}

.select select {
    width: 100%;
    height: 100%;
    padding: 0 10px;
    appearance: none;
}

.select .ico {
    position: absolute;
    right: 10px;
    top: 9px;
    color: #71757f;
}

.search {
    display: flex;
    align-items: center;
    height: 32px;
    margin-bottom: 10px;
    padding: 0 13px 0 8px;
    border: 1px solid #dfdfdf;
    border-radius: 4px;
    color: #71757f;
}

.search input {
    flex: 1;
    padding: 0;
}

.search input::placeholder {
    color: #b3b6bd;
}

.tree li a {
    display: flex;
    align-items: center;
    height: 34px;
    padding-left: 6px;
}

.tree .files {
    margin-top: 3px;
}

.folder {
    width: 14px;
    height: 14px;
    margin: 0 9px 0 1px;
}

.file {
    width: 14px;
    height: 16px;
    margin-right: 8px;
}

.tree .file, .name .file {
    color: #8a8e99;
    stroke-width: 1.4;
}

.md {
    width: 16px;
    height: 10px;
    margin: 0 7px 0 1px;
}

.xml {
    width: 16px;
    height: 16px;
    margin: 0 7px 0 1px;
}

/* file list */
.panel {
    flex: 1;
    min-width: 0;
    position: relative;
    padding: 12px 25px 0 20px;
    background: #f2f2f2;
    overflow: hidden;
}

.path-row {
    display: flex;
    align-items: center;
    gap: 8px;
    height: 32px;
    margin-bottom: 16px;
}

.path-row i {
    color: #71757f;
}

.create {
    height: 24px;
    gap: 4px;
    padding: 0 7px 0 5px;
    border: 1px solid #c9c9c9;
    border-radius: 3px;
    background: #fff;
    color: #71757f;
}

.caret {
    width: 8px;
    height: 6px;
    margin-left: 3px;
    fill: #191919;
}

.batch {
    gap: 9px;
    margin-left: auto;
    padding-right: 8px;
    color: #c3c3c6;
}

.card {
    border-radius: 8px;
    background: #fff;
    box-shadow: 0 1px 6px rgba(0, 0, 0, 0.08);
    overflow: hidden;
}

.card-tabs {
    display: flex;
    gap: 24px;
    height: 48px;
    padding: 0 18px;
    border-bottom: 1px solid #efefef;
}

.card-tabs a {
    display: flex;
    align-items: center;
    height: 48px;
    border-bottom: 2px solid transparent;
}

.card-tabs .active {
    border-color: #252b3a;
}

.card-tabs .ico {
    margin-right: 8px;
}

table {
    width: 100%;
    border-spacing: 0;
    table-layout: fixed;
}

.c-name { width: 42.1%; }
.c-commit { width: 29.6%; }

td {
    height: 44px;
    padding: 0 0 7px;
    border-bottom: 1px solid #f0f0f0;
    overflow: hidden;
    white-space: nowrap;
}

td:first-child {
    padding: 0 69px 1px 20px;
}

tr:last-child td {
    border-bottom: none;
}

.hover {
    background: #f2f2f2;
}

.name {
    display: flex;
    align-items: center;
}

.name button {
    margin-left: auto;
}

.hash {
    display: inline-block;
    width: 59px;
    color: #5e7ce0;
    font-size: 12px;
}

td i {
    display: inline-block;
    width: 13px;
}

.who {
    margin-right: 5px;
}

.readme {
    height: 400px;
    margin-top: 16px;
}

.readme-head {
    display: flex;
    align-items: center;
    justify-content: space-between;
    height: 57px;
    padding: 0 28px 5px 20px;
    border-bottom: 1px solid #d9d9d9;
}

.readme h3 {
    font-size: 14px;
}

.readme h2 {
    padding: 35px 20px 0;
    font-size: 28px;
    line-height: 42px;
}

.scrollbar {
    position: absolute;
    right: 0;
    top: 0;
    width: 5px;
    height: 86%;
    border-radius: 3px;
    background: #cbcbcb;
}

/* right rail */
.rail {
    display: flex;
    flex-direction: column;
    align-items: center;
    gap: 25px;
    width: 36px;
    padding: 40px 0 66px 2px;
    position: relative;
    background: #fff;
    box-shadow: -2px 0 6px rgba(0, 0, 0, 0.1);
}

.rail .headset {
    margin-top: auto;
}

.rail .headset + button {
    margin-top: 2px;
}

.watermark {
    position: absolute;
    left: 3px;
    top: 91px;
    z-index: 3;
    display: grid;
    grid-template-columns: repeat(5, 380px);
    grid-auto-rows: 250px;
    place-items: center;
    pointer-events: none;
    color: rgba(0, 0, 0, 0.06);
    font-family: "Open Sans", "Noto Sans CJK SC", sans-serif;
    font-size: 16px;
    line-height: 24px;
    text-align: center;
    white-space: nowrap;
}

.watermark p {
    transform: rotate(-20deg);
}

/* windows taskbar */
.taskbar {
    display: grid;
    grid-template-columns: 1fr auto 1fr;
    align-items: center;
    height: 47px;
    padding: 0 18px;
    border-top: 1px solid #b9b9b9;
    background: #ededed;
    font-family: "Open Sans", "Noto Sans CJK SC", sans-serif;
    font-size: 12px;
    line-height: 16px;
}

.weather {
    justify-self: start;
    gap: 8px;
    text-align: left;
}

.weather svg {
    width: 24px;
    height: 16px;
}

.apps {
    display: flex;
    align-items: center;
    gap: 6px;
}

.apps button {
    width: 38px;
    height: 38px;
    border-radius: 4px;
    position: relative;
}

.apps button svg {
    width: 24px;
    height: 24px;
}

.apps .focused {
    background: #f9f9f9;
    box-shadow: 0 0 1px #aaa;
}

.running::after {
    content: "";
    position: absolute;
    left: 16px;
    bottom: 0;
    width: 6px;
    height: 3px;
    border-radius: 2px;
    background: #8a8a8a;
}

.focused::after {
    left: 11px;
    width: 16px;
    background: #6b69c4;
}

.ps {
    fill: #8bc6fa;
    font-size: 12px;
    font-weight: bold;
}

.task-search {
    display: flex;
    align-items: center;
    gap: 8px;
    width: 218px;
    height: 32px;
    padding: 0 3px 0 11px;
    border: 1px solid #d6d6d6;
    border-radius: 16px;
    background: #fafafa;
    font-size: 14px;
}

.task-search input {
    flex: 1;
    padding: 0;
}

.task-search input::placeholder {
    color: #555;
}

.scene {
    width: 50px;
    height: 26px;
}

.tray {
    justify-self: end;
    display: flex;
    align-items: center;
    gap: 17px;
}

.mic {
    color: #4b4a9c;
}

.ime {
    font-size: 14px;
}

.sogou {
    margin-left: 5px;
}

.sogou svg {
    width: 16px;
    height: 16px;
}

.net {
    gap: 8px;
    margin-left: 5px;
}

.clock {
    text-align: right;
}

.clock + button {
    margin-left: -10px;
}
```
